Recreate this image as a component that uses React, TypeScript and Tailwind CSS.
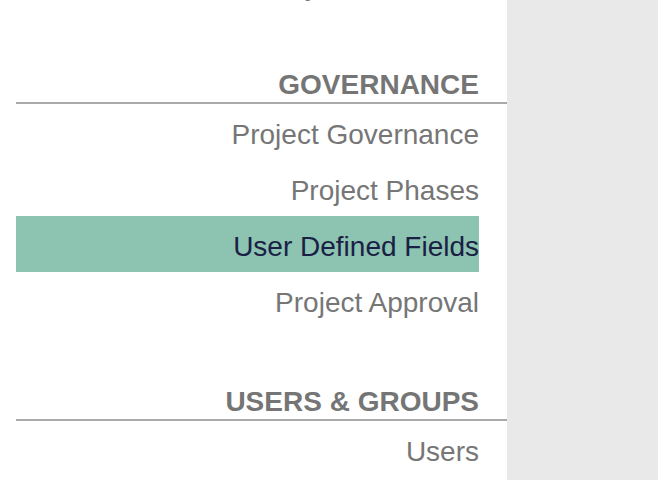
const sections = [
  {
    title: 'GOVERNANCE',
    items: ['Project Governance', 'Project Phases', 'User Defined Fields', 'Project Approval'],
  },
  {
    title: 'USERS & GROUPS',
    items: ['Users'],
  },
]

const active = 'User Defined Fields'

function NavItem({ label }: { label: string }) {
  const selected = label === active
  return (
    <div
      className={`h-[56px] pt-[15px] pb-[9px] text-right text-[28px] leading-[32px] whitespace-nowrap ${
        selected ? 'bg-[#8cc3b1] text-[#1b1f45]' : 'text-[#767676]'
      }`}
    >
      {label}
    </div>
  )
}

export default function App() {
  return (
    <div
      className="flex h-[480px] w-full overflow-hidden bg-white"
      style={{ fontFamily: '"Liberation Sans", Arial, Helvetica, sans-serif' }}
    >
      <div className="w-[507px] shrink-0 pl-[16px]">
        {/* tail of previous section, scrolled out of view */}
        <div className="-mt-[45px] mr-[28px]">
          <NavItem label="Activity Notifications" />
        </div>

        {sections.map((s) => (
          <div key={s.title} className="mt-[58px]">
            <div className="border-b-2 border-[#a9a9a9] pr-[28px] pb-[1px] text-right text-[28px] font-bold leading-[32px] text-[#757575]">
              {s.title}
            </div>
            <div className="mr-[28px]">
              {s.items.map((item) => (
                <NavItem key={item} label={item} />
              ))}
            </div>
          </div>
        ))}
      </div>
      <div className="flex-1 bg-[#e9e9e9]" />
    </div>
  )
}
